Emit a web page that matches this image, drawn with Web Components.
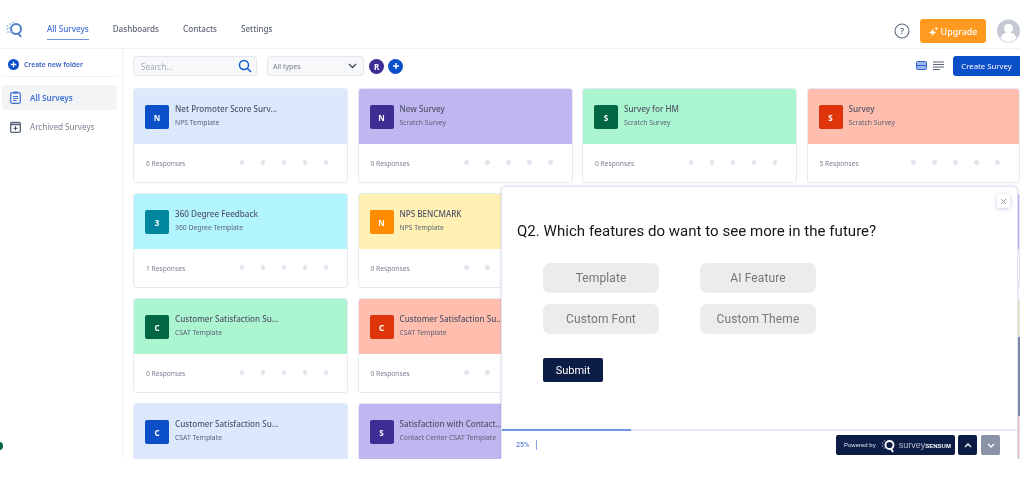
<!DOCTYPE html>
<html lang="en"><head><meta charset="utf-8"><title>Surveys</title>
<style>
html,body{margin:0;background:#fff}
body{font-family:"Noto Sans","Liberation Sans",sans-serif;width:1024px;height:477px;overflow:hidden}
</style></head><body>
<ss-app></ss-app>
<template id="t-app"><style>
:host{display:block;position:relative;width:1020px;height:459px;overflow:hidden;background:#fff;filter:blur(.3px)}
.body{display:grid;grid-template-columns:123px 1fr;height:410px}
.chat{position:absolute;left:-4px;top:442px;width:7px;height:8px;border-radius:50%;background:#006644}
.thumb{position:absolute;left:1018px;top:337px;width:2px;height:79px;background:#7e8aa8}
</style>
<ss-header></ss-header>
<div class="body"><ss-sidebar></ss-sidebar><ss-main></ss-main></div>
<div class="chat"></div>
<div class="thumb"></div>
<ss-modal></ss-modal>
</template>

<template id="t-header"><style>
:host{display:flex;align-items:flex-start;height:48px;border-bottom:1px solid #f0f2f6;box-sizing:content-box;color:#5e6475;font-size:8.100px;font-weight:500}
svg{display:block;flex:none}
.logo{margin:21px 0 0 6px}
nav{display:flex;gap:24px;margin:0 0 0 23px;padding-top:23px}
nav a{display:block;line-height:12px;padding-bottom:4px;border-bottom:1px solid transparent;height:12px}
nav a.on{color:#3f6fd8;border-bottom-color:#6f93e3}
.right{margin-left:auto;display:flex;align-items:center;padding-top:19px}
.up{width:66px;height:24px;margin:0 11px 0 10px;background:#ff991f;border-radius:3px;color:#fff;font-size:8.900px;display:flex;align-items:center;justify-content:center;gap:3px}
</style>
<svg class="logo" width="18" height="18" viewBox="0 0 18 18"><circle cx="10" cy="8" r="5" fill="none" stroke="#4a80cc" stroke-width="2"/><path d="M12 12l3 4" stroke="#4a80cc" stroke-width="2"/><g fill="#a9c2e6"><circle cx="1.500" cy="5" r="1"/><circle cx="1" cy="8" r="1"/><circle cx="2" cy="11" r="1"/><circle cx="4" cy="3" r="1"/><circle cx="3.500" cy="7" r="1"/><circle cx="4.500" cy="11" r="1"/><circle cx="7" cy="1.500" r="1"/></g></svg>
<nav><a class="on">All Surveys</a><a>Dashboards</a><a>Contacts</a><a>Settings</a></nav>
<div class="right">
<svg width="16" height="16" viewBox="0 0 16 16"><circle cx="8" cy="8" r="7" fill="none" stroke="#5f6b85" stroke-width="1.100"/><text x="8" y="11" text-anchor="middle" font-size="9" font-weight="600" font-family="Noto Sans" fill="#5f6b85">?</text></svg>
<div class="up"><svg width="9" height="9" viewBox="0 0 10 10"><path d="M4 2l1.200 2.600L8 6 5.200 7.200 4 10 2.800 7.200 0 6l2.800-1.400zM8 0l.6 1.200L10 2l-1.400.6L8 4l-.6-1.400L6 2l1.400-.8z" fill="#fff"/></svg>Upgrade</div>
<svg width="23" height="24" viewBox="0 0 23 24"><circle cx="11.500" cy="12" r="11.500" fill="#c3c8d2"/><circle cx="11.500" cy="9.500" r="4.600" fill="#fff"/><path d="M3.500 19c1-4 4-5.500 8-5.500s7 1.500 8 5.500c-2 2.500-4.800 4-8 4s-6-1.500-8-4z" fill="#fff"/></svg>
</div></template>

<template id="t-sidebar"><style>
:host{display:block;border-right:1px solid #f0f2f6;box-sizing:border-box;height:100%;font-size:8.100px;color:#7b8190}
svg{display:block;flex:none}
.new{box-sizing:border-box;display:flex;align-items:center;gap:5px;height:27px;margin-left:8px;padding-top:3px;color:#3d62c4;font-size:6.800px;font-weight:600}
.rule{height:1px;background:#f0f2f6;margin:0 5px 0 2px}
.item{display:flex;align-items:center;gap:9px;height:25px;margin:0 5px 0 2px;padding-left:8px;border-radius:3px}
.on{margin-top:8px;background:#f3f4f6;color:#3f6fd8;font-weight:600}
.arch{margin-top:4px}
</style>
<div class="new"><svg width="11" height="11" viewBox="0 0 12 12"><circle cx="6" cy="6" r="6" fill="#0b4fc9"/><path d="M6 3v6M3 6h6" stroke="#fff" stroke-width="1.400"/></svg>Create new folder</div>
<div class="rule"></div>
<div class="item on"><svg width="11" height="13" viewBox="0 0 11 13"><rect x=".7" y="1.700" width="9.600" height="10.600" rx="1.500" fill="none" stroke="#3f6fd8" stroke-width="1.200"/><rect x="3.500" y=".5" width="4" height="2.200" fill="#3f6fd8"/><path d="M3 5.500h5M3 7.500h5M3 9.500h3.500" stroke="#3f6fd8"/></svg>All Surveys</div>
<div class="item arch"><svg width="11" height="12" viewBox="0 0 11 12"><rect x=".7" y="1.500" width="9.600" height="9.800" rx="1" fill="none" stroke="#5a6478" stroke-width="1.300"/><path d="M1 3.500h9" stroke="#5a6478" stroke-width="1.500"/><path d="M5.500 5.300v4M3.500 7.300h4" stroke="#3c4558"/></svg>Archived Surveys</div>
</template>

<template id="t-main"><style>
:host{display:block;padding:7px 0 0 10px;overflow:hidden;min-width:0}
.bar{display:flex;align-items:center;height:20px;margin-bottom:12px}
svg{display:block;flex:none}
.search,.select{box-sizing:border-box;height:20px;border:1px solid #e4e7ed;border-radius:3px;background:#f7f8fa;display:flex;align-items:center;justify-content:space-between;font-size:8px;color:#a4a9b4}
.search{width:124px;padding:0 4px 0 7px;margin-right:10px}
.select{width:97px;padding:0 6px 0 5px;font-size:7px;color:#7c8290;margin-right:5px}
.av{width:15px;height:15px;border-radius:50%;display:flex;align-items:center;justify-content:center;color:#fff;font-size:8px;font-weight:700;background:#3f2d94;margin-right:4px}
.plus{background:#0b4fc9}
.views{margin-left:auto;display:flex;gap:6px;margin-right:9px}
.btn{width:67px;height:20px;background:#0b4fc9;color:#fff;font-size:7.800px;display:flex;align-items:center;justify-content:center;border-radius:3px 0 0 3px}
.grid{display:grid;grid-template-columns:215px 215px 215px 213px;gap:10px 9.500px}
</style>
<div class="bar">
<div class="search">Search...<svg width="14" height="14" viewBox="0 0 14 14"><circle cx="6" cy="6" r="4.500" fill="none" stroke="#0b5bc9" stroke-width="1.500"/><path d="M9.500 9.500l3.500 3.500" stroke="#0b5bc9" stroke-width="1.600"/></svg></div>
<div class="select">All types<svg width="9" height="6" viewBox="0 0 9 6"><path d="M1 1l3.500 3.500L8 1" fill="none" stroke="#3f4657" stroke-width="1.300"/></svg></div>
<div class="av">R</div>
<div class="av plus"><svg width="8" height="8" viewBox="0 0 8 8"><path d="M4 1v6M1 4h6" stroke="#fff" stroke-width="1.400"/></svg></div>
<div class="views">
<svg width="11" height="9" viewBox="0 0 11 9"><rect x=".5" y=".5" width="10" height="8" rx="1" fill="none" stroke="#2f62d0"/><path d="M.5 4.500h10" stroke="#2f62d0" stroke-width="1.200"/><rect x="1" y="1" width="9" height="3" fill="#9db6ea"/><rect x="1" y="5" width="9" height="3" fill="#9db6ea"/></svg>
<svg width="11" height="10" viewBox="0 0 11 10"><path d="M0 1h11M0 3.500h11M0 6h11M0 8.500h7" stroke="#5d6577" stroke-width="1.200"/></svg>
</div>
<div class="btn">Create Survey</div>
</div>
<div class="grid">
<ss-card tone="blue" letter="N" name="Net Promoter Score Surv..." kind="NPS Template" count="6"></ss-card>
<ss-card tone="purple" letter="N" name="New Survey" kind="Scratch Survey" count="0"></ss-card>
<ss-card tone="green" letter="S" name="Survey for HM" kind="Scratch Survey" count="0"></ss-card>
<ss-card tone="red" letter="S" name="Survey" kind="Scratch Survey" count="5"></ss-card>
<ss-card tone="cyan" letter="3" name="360 Degree Feedback" kind="360 Degree Template" count="1"></ss-card>
<ss-card tone="yellow" letter="N" name="NPS BENCMARK" kind="NPS Template" count="0"></ss-card>
<ss-card tone="green" blank></ss-card><ss-card tone="purple" blank></ss-card>
<ss-card tone="green" letter="C" name="Customer Satisfaction Su..." kind="CSAT Template" count="0"></ss-card>
<ss-card tone="red" letter="C" name="Customer Satisfaction Su..." kind="CSAT Template" count="0"></ss-card>
<ss-card tone="blue" blank></ss-card><ss-card tone="yellow" blank></ss-card>
<ss-card tone="blue" letter="C" name="Customer Satisfaction Su..." kind="CSAT Template" count=""></ss-card>
<ss-card tone="purple" letter="S" name="Satisfaction with Contact..." kind="Contact Center CSAT Template" count=""></ss-card>
<ss-card tone="blue" blank></ss-card><ss-card tone="red" blank></ss-card>
</div></template>

<template id="t-card"><style>
:host{display:block;height:95px;box-sizing:border-box;border:1px solid #e6eaf2;border-radius:3px;overflow:hidden;background:#fff}
.head{height:55px;box-sizing:border-box;display:flex;align-items:center;gap:6px;padding:0 0 0 11px;background:var(--bg)}
.txt{margin-top:-2px}
.ic{width:24px;height:24px;border-radius:2px;background:var(--fg);color:#fff;font-size:8px;font-weight:700;display:flex;align-items:center;justify-content:center;flex:none;margin-top:1px}
.t{font-size:8.100px;line-height:12px;color:#4f5468;font-weight:500;white-space:nowrap}
.k{font-size:6.800px;line-height:11px;margin-top:2px;color:#5c6275;white-space:nowrap}
.foot{height:38px;display:flex;align-items:center;justify-content:space-between;padding:0 19px 0 12px;font-size:6.700px;color:#7d8290}
.dots{display:flex;gap:16.500px;margin-top:-1px}
.dots i{width:4.500px;height:4.500px;border-radius:50%;background:#e3e6ef;display:block}
</style>
<div class="head"><div class="ic"></div><div class="txt"><div class="t"></div><div class="k"></div></div></div>
<div class="foot"><span class="c"></span><div class="dots"><i></i><i></i><i></i><i></i><i></i></div></div>
</template>

<template id="t-modal"><style>
:host{position:absolute;left:501px;top:186px;width:517px;height:273px;box-sizing:border-box;background:#fff;border:1px solid #dfe4f2;border-bottom:0;border-radius:5px 5px 0 0;font-family:Roboto,"Liberation Sans",sans-serif;display:flex;flex-direction:column;box-shadow:0 0 3px rgba(90,110,170,.25)}
.x{position:absolute;right:7px;top:7px;width:13px;height:14px;border-radius:3px;background:#fff;box-shadow:0 1px 4px rgba(90,110,190,.35);display:flex;align-items:center;justify-content:center}
.c{flex:1;padding:34px 0 0 15px}
h2{margin:0;font-size:15px;line-height:20px;font-weight:400;color:#14161a;letter-spacing:.04px}
.opts{display:grid;grid-template-columns:116px 116px;gap:11px 41px;margin:22px 0 0 26px}
.o{height:30px;border-radius:7px;background:#ececec;color:#777;font-size:12px;display:flex;align-items:center;justify-content:center;letter-spacing:.1px;padding-bottom:1px;box-sizing:border-box}
.s{width:60px;height:24px;margin:24px 0 0 26px;background:#0b1c45;color:#fff;border-radius:2px;font-size:11px;font-weight:400;display:flex;align-items:center;justify-content:center}
.prog{height:2px;background:#e4eafa;flex:none}
.prog i{display:block;width:129px;height:2px;background:#6f93e3}
.f{height:28px;flex:none;display:flex;align-items:center;padding:0 17px 0 14px;font-size:7px;color:#5a80d8;font-weight:500}
.f .bar{width:1px;height:10px;background:#8aa6e6;margin-left:7px}
.pw{margin-left:auto;box-sizing:border-box;width:119px;height:20px;background:#0b1c45;border-radius:2px;color:#dfe3ee;font-size:6px;font-weight:400;display:flex;align-items:center;padding-left:8px;gap:2px;font-family:"Liberation Sans",sans-serif}
.pw svg{margin:0 1px 0 3px}
.pw b{font-weight:300;font-size:9px;color:#b7bdcd}
.pw b span{font-weight:700;font-size:6px;color:#fff}
.a{width:19px;height:20px;border-radius:2px;background:#0b1c45;margin-left:3px;display:flex;align-items:center;justify-content:center}
.a.d{background:#8b93a7;margin-left:4px}
svg{display:block;flex:none}
</style>
<div class="x"><svg width="7" height="7" viewBox="0 0 7 7"><path d="M1 1l5 5M6 1l-5 5" stroke="#8a90a0" stroke-width=".9"/></svg></div>
<div class="c"><h2>Q2. Which features do want to see more in the future?</h2>
<div class="opts"><div class="o">Template</div><div class="o">AI Feature</div><div class="o">Custom Font</div><div class="o">Custom Theme</div></div>
<div class="s">Submit</div></div>
<div class="prog"><i></i></div>
<div class="f"><span>25%</span><div class="bar"></div>
<div class="pw"><span>Powered by</span><svg width="15" height="15" viewBox="0 0 15 15"><circle cx="8.500" cy="7" r="4" fill="none" stroke="#fff" stroke-width="1.800"/><path d="M10 10.500l2 3.500" stroke="#fff" stroke-width="1.800"/><g fill="#98a0b4"><circle cx="1.500" cy="5" r=".8"/><circle cx="1.500" cy="8" r=".8"/><circle cx="3.500" cy="3" r=".8"/><circle cx="3.500" cy="6.500" r=".8"/><circle cx="3.500" cy="10" r=".8"/></g></svg><b>survey<span>SENSUM</span></b></div>
<div class="a"><svg width="8" height="5" viewBox="0 0 8 5"><path d="M1 4l3-3 3 3" fill="none" stroke="#fff" stroke-width="1.300"/></svg></div>
<div class="a d"><svg width="8" height="5" viewBox="0 0 8 5"><path d="M1 1l3 3 3-3" fill="none" stroke="#fff" stroke-width="1.300"/></svg></div>
</div></template>

<script>
const mount=(el,id)=>{const r=el.attachShadow({mode:'open'});r.appendChild(document.getElementById(id).content.cloneNode(true));return r};
const simple=(tag,id)=>customElements.define(tag,class extends HTMLElement{constructor(){super();mount(this,id)}});
const tones={blue:['#dce9fc','#0b4fc9'],purple:['#c0b6f0','#3f2d94'],green:['#abf5d1','#006644'],red:['#ffbdad','#de350b'],cyan:['#b3f5ff','#00879f'],yellow:['#fff0b3','#ff8b00']};
customElements.define('ss-card',class extends HTMLElement{
 constructor(){super();this.r=mount(this,'t-card')}
 connectedCallback(){const a=n=>this.getAttribute(n)||'',[bg,fg]=tones[a('tone')];
  this.style.setProperty('--bg',bg);this.style.setProperty('--fg',fg);
  const r=this.r;
  if(this.hasAttribute('blank')){r.querySelector('.head').innerHTML='';r.querySelector('.foot').innerHTML='';return}
  r.querySelector('.ic').textContent=a('letter');r.querySelector('.t').textContent=a('name');r.querySelector('.k').textContent=a('kind');
  if(a('count'))r.querySelector('.c').textContent=a('count')+' Responses';}
});
simple('ss-header','t-header');simple('ss-sidebar','t-sidebar');simple('ss-main','t-main');simple('ss-modal','t-modal');simple('ss-app','t-app');
</script>
</body></html>
